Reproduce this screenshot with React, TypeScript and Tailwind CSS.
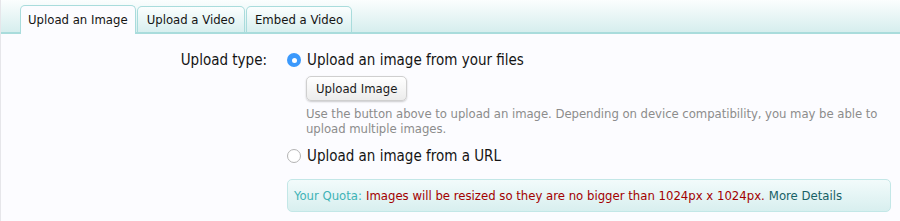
import React from "react";

export default function App() {
  const font = { fontFamily: '"DejaVu Sans Condensed", "DejaVu Sans", sans-serif' };
  return (
    <div className="w-[900px] h-[221px] bg-[#fcfcff] overflow-hidden border-l border-[#e6e6ea]" style={font}>
      <div className="h-[34px] bg-gradient-to-b from-[#fbfefe] to-[#d6eeee] border-b-2 border-[#a9dcdc] flex items-end pl-[19px]">
        <div className="flex items-end gap-[1px] -mb-[2px]">
          <div className="h-[29px] px-[7px] flex items-center bg-[#fcfcff] border border-b-0 border-[#a9dcdc] rounded-t-[5px] text-[13px] text-[#141414]">
            Upload an Image
          </div>
          <div className="h-[28px] px-[9px] flex items-center bg-gradient-to-b from-[#fbfefe] to-[#d8efef] border border-[#a9dcdc] border-b-2 rounded-t-[5px] text-[13px] text-[#141414]">
            Upload a Video
          </div>
          <div className="h-[28px] px-[8px] flex items-center bg-gradient-to-b from-[#fbfefe] to-[#d8efef] border border-[#a9dcdc] border-b-2 rounded-t-[5px] text-[13px] text-[#141414]">
            Embed a Video
          </div>
        </div>
      </div>
      <div className="flex pt-[16px]">
        <div className="w-[266px] text-right text-[15px] text-[#141414] leading-[18px] pt-[1px]">Upload type:</div>
        <div className="ml-[20px] flex flex-col w-[604px]">
          <label className="flex items-center h-[20px] text-[15px] text-[#141414]">
            <span className="w-[14px] h-[14px] rounded-full bg-[#3b99fc] flex items-center justify-center mr-[6px]">
              <span className="w-[5px] h-[5px] rounded-full bg-white" />
            </span>
            Upload an image from your files
          </label>
          <div className="pl-[19px] mt-[6px]">
            <button className="h-[25px] px-[9px] rounded-[5px] border border-[#cfcfcf] bg-gradient-to-b from-white to-[#ececec] shadow-[0_1px_2px_rgba(0,0,0,0.2)] text-[13px] text-[#1a1a1a] font-medium" style={font}>
              Upload Image
            </button>
          </div>
          <div className="pl-[19px] mt-[5px] text-[13px] leading-[15px] text-[#8c8c8c] tracking-[-0.05px]">
            Use the button above to upload an image. Depending on device compatibility, you may be able to upload multiple images.
          </div>
          <label className="flex items-center h-[20px] mt-[10px] text-[15px] text-[#141414]">
            <span className="w-[14px] h-[14px] rounded-full bg-white border border-[#b4b4b4] mr-[6px]" />
            Upload an image from a URL
          </label>
          <div className="mt-[13px] h-[33px] rounded-[5px] border border-[#c3e7e7] bg-gradient-to-b from-[#f2fbfb] to-[#d8efef] flex items-center px-[6px] text-[13px]">
            <span className="text-[#3fb3b6]">Your Quota:</span>
            <span className="text-[#a30000] ml-[4px]">Images will be resized so they are no bigger than 1024px x 1024px.</span>
            <span className="text-[#176166] ml-[4px]">More Details</span>
          </div>
        </div>
      </div>
    </div>
  );
}
